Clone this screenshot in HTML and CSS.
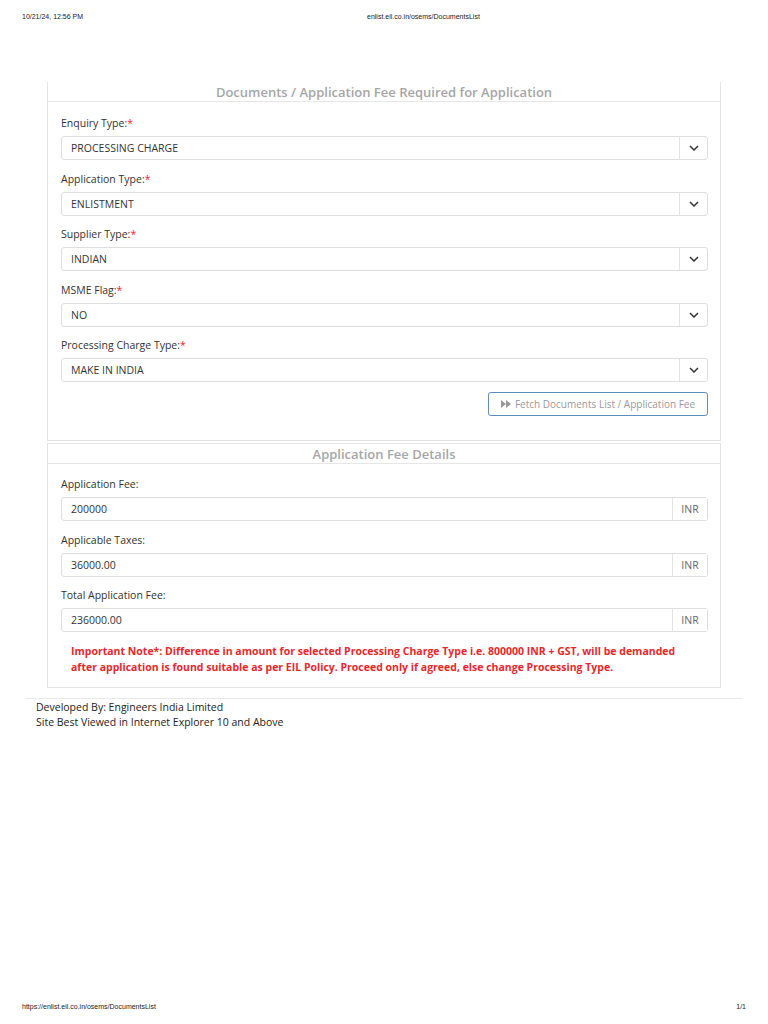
FILE: index.html
```html
<!DOCTYPE html>
<html>
<head>
<meta charset="utf-8">
<link rel="stylesheet" href="styles.css">
</head>
<body>
<div class="print-head">
  <span class="ph-date">10/21/24, 12:56 PM</span>
  <span class="ph-url">enlist.eil.co.in/osems/DocumentsList</span>
</div>

<main class="main">
  <section class="card card-first">
    <div class="card-title">Documents / Application Fee Required for Application</div>
    <div class="card-body">
      <div class="group">
        <div class="label">Enquiry Type:<span class="req">*</span></div>
        <div class="select"><span class="val">PROCESSING CHARGE</span><span class="caret"><svg width="10" height="6" viewBox="0 0 10 6"><path d="M1 1l4 4 4-4" fill="none" stroke="#333" stroke-width="1.5"/></svg></span></div>
      </div>
      <div class="group">
        <div class="label">Application Type:<span class="req">*</span></div>
        <div class="select"><span class="val">ENLISTMENT</span><span class="caret"><svg width="10" height="6" viewBox="0 0 10 6"><path d="M1 1l4 4 4-4" fill="none" stroke="#333" stroke-width="1.5"/></svg></span></div>
      </div>
      <div class="group">
        <div class="label">Supplier Type:<span class="req">*</span></div>
        <div class="select"><span class="val">INDIAN</span><span class="caret"><svg width="10" height="6" viewBox="0 0 10 6"><path d="M1 1l4 4 4-4" fill="none" stroke="#333" stroke-width="1.5"/></svg></span></div>
      </div>
      <div class="group">
        <div class="label">MSME Flag:<span class="req">*</span></div>
        <div class="select"><span class="val">NO</span><span class="caret"><svg width="10" height="6" viewBox="0 0 10 6"><path d="M1 1l4 4 4-4" fill="none" stroke="#333" stroke-width="1.5"/></svg></span></div>
      </div>
      <div class="group">
        <div class="label">Processing Charge Type:<span class="req">*</span></div>
        <div class="select"><span class="val">MAKE IN INDIA</span><span class="caret"><svg width="10" height="6" viewBox="0 0 10 6"><path d="M1 1l4 4 4-4" fill="none" stroke="#333" stroke-width="1.5"/></svg></span></div>
      </div>
      <div class="actions">
        <button class="btn"><svg class="ff" width="10" height="8" viewBox="0 0 10 8"><path d="M0 0l5 4-5 4z M5 0l5 4-5 4z" fill="#999"/></svg>Fetch Documents List / Application Fee</button>
      </div>
    </div>
  </section>

  <section class="card card-second">
    <div class="card-title">Application Fee Details</div>
    <div class="card-body">
      <div class="group">
        <div class="label">Application Fee:</div>
        <div class="input-group"><span class="val">200000</span><span class="addon">INR</span></div>
      </div>
      <div class="group">
        <div class="label">Applicable Taxes:</div>
        <div class="input-group"><span class="val">36000.00</span><span class="addon">INR</span></div>
      </div>
      <div class="group">
        <div class="label">Total Application Fee:</div>
        <div class="input-group"><span class="val">236000.00</span><span class="addon">INR</span></div>
      </div>
      <p class="note">Important Note*: Difference in amount for selected Processing Charge Type i.e. 800000 INR + GST, will be demanded after application is found suitable as per EIL Policy. Proceed only if agreed, else change Processing Type.</p>
    </div>
  </section>
</main>

<footer class="footer">
  <div>Developed By: Engineers India Limited</div>
  <div>Site Best Viewed in Internet Explorer 10 and Above</div>
</footer>

<div class="print-foot">
  <span>https://enlist.eil.co.in/osems/DocumentsList</span>
  <span>1/1</span>
</div>
</body>
</html>
```

FILE: styles.css
```css
* { box-sizing: border-box; }
html, body { margin: 0; padding: 0; background: #fff; }
body {
  width: 768px;
  height: 1024px;
  position: relative;
  font-family: "Open Sans", "Noto Sans", sans-serif;
  color: #333;
}

.print-head {
  display: grid;
  grid-template-columns: 345px auto;
  padding: 12px 0 0 22px;
  height: 82px;
  font-family: "Liberation Sans", Arial, sans-serif;
  font-size: 7px;
  line-height: 9px;
  color: #222;
}

.main {
  margin: 0 47px;
  width: 674px;
}

.card {
  border: 1px solid #e3e3e3;
  background: #fff;
}
.card-first { border-top: none; }
.card-second { margin-top: 2px; }

.card-title {
  height: 20px;
  line-height: 20px;
  text-align: center;
  font-size: 13px;
  font-weight: 600;
  color: #a6a6a6;
  border-bottom: 1px solid #e6e6e6;
}

.card-body {
  padding: 13px 12px 13px 13px;
}
.card-second .card-body {
  padding-top: 12px;
  padding-bottom: 12px;
}

.group { margin-bottom: 10.5px; }

.label {
  font-size: 10.5px;
  line-height: 16px;
  margin-bottom: 5px;
  color: #333;
}
.req { color: #e8262e; }

.select, .input-group {
  display: flex;
  height: 24px;
  border: 1px solid #dedede;
  border-radius: 3px;
  font-size: 10.5px;
  align-items: stretch;
}
.val {
  flex: 1;
  display: flex;
  align-items: center;
  padding-left: 9px;
  color: #333;
}
.caret {
  width: 28px;
  border-left: 1px solid #e2e2e2;
  display: flex;
  align-items: center;
  justify-content: center;
}
.addon {
  width: 35px;
  border-left: 1px solid #e2e2e2;
  background: #fff;
  display: flex;
  align-items: center;
  justify-content: center;
  color: #666;
  font-size: 10.5px;
}

.actions {
  display: flex;
  justify-content: flex-end;
  margin-top: -0.5px;
  margin-bottom: 11px;
}
.btn {
  height: 24px;
  width: 220px;
  border: 1px solid #5d8cbd;
  border-radius: 3px;
  background: #fff;
  font-family: "Open Sans", "Noto Sans", sans-serif;
  font-size: 10px;
  color: #999;
  display: flex;
  align-items: center;
  justify-content: center;
  gap: 4px;
  padding: 0;
}
.ff { display: block; }

.note {
  margin: 0;
  padding: 0 10px;
  font-size: 10.5px;
  line-height: 16px;
  font-weight: 700;
  color: #e8262e;
}

.footer {
  margin: 10px 25px 0 25px;
  border-top: 1px solid #e8e8e8;
  padding: 1px 0 0 11px;
  font-size: 10.5px;
  line-height: 15px;
  color: #222;
}

.print-foot {
  position: absolute;
  left: 22px;
  right: 22px;
  top: 1002px;
  display: flex;
  justify-content: space-between;
  font-family: "Liberation Sans", Arial, sans-serif;
  font-size: 7px;
  line-height: 9px;
  color: #222;
}
```
